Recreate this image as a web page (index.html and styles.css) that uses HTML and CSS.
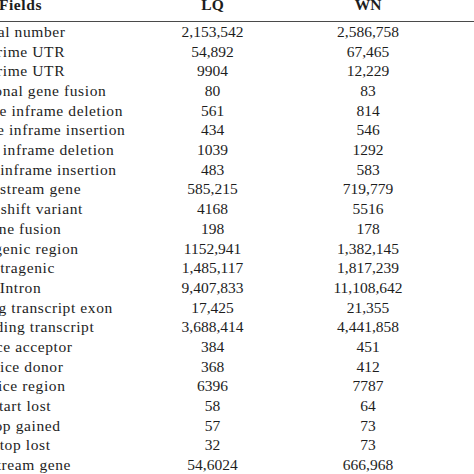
FILE: index.html
```html
<!DOCTYPE html>
<html lang="en">
<head>
<meta charset="utf-8">
<title>Variant annotation counts</title>
<link rel="stylesheet" href="styles.css">
</head>
<body>
<div class="frame">
  <table class="data">
    <colgroup>
      <col class="c-field">
      <col class="c-lq">
      <col class="c-wn">
      <col class="c-pad">
    </colgroup>
    <thead>
      <tr><th class="label">Fields</th><th>LQ</th><th>WN</th><th></th></tr>
    </thead>
    <tbody>
      <tr><td class="label">Total number</td><td>2,153,542</td><td>2,586,758</td><td></td></tr>
      <tr><td class="label">3 prime UTR</td><td>54,892</td><td>67,465</td><td></td></tr>
      <tr><td class="label">5 prime UTR</td><td>9904</td><td>12,229</td><td></td></tr>
      <tr><td class="label">Bidirectional gene fusion</td><td>80</td><td>83</td><td></td></tr>
      <tr><td class="label">Conservative inframe deletion</td><td>561</td><td>814</td><td></td></tr>
      <tr><td class="label">Conservative inframe insertion</td><td>434</td><td>546</td><td></td></tr>
      <tr><td class="label">Disruptive inframe deletion</td><td>1039</td><td>1292</td><td></td></tr>
      <tr><td class="label">Disruptive inframe insertion</td><td>483</td><td>583</td><td></td></tr>
      <tr><td class="label">Downstream gene</td><td>585,215</td><td>719,779</td><td></td></tr>
      <tr><td class="label">Frameshift variant</td><td>4168</td><td>5516</td><td></td></tr>
      <tr><td class="label">Gene fusion</td><td>198</td><td>178</td><td></td></tr>
      <tr><td class="label">Intergenic region</td><td>1152,941</td><td>1,382,145</td><td></td></tr>
      <tr><td class="label">Intragenic</td><td>1,485,117</td><td>1,817,239</td><td></td></tr>
      <tr><td class="label">Intron</td><td>9,407,833</td><td>11,108,642</td><td></td></tr>
      <tr><td class="label">Non coding transcript exon</td><td>17,425</td><td>21,355</td><td></td></tr>
      <tr><td class="label">Non coding transcript</td><td>3,688,414</td><td>4,441,858</td><td></td></tr>
      <tr><td class="label">Splice acceptor</td><td>384</td><td>451</td><td></td></tr>
      <tr><td class="label">Splice donor</td><td>368</td><td>412</td><td></td></tr>
      <tr><td class="label">Splice region</td><td>6396</td><td>7787</td><td></td></tr>
      <tr><td class="label">Start lost</td><td>58</td><td>64</td><td></td></tr>
      <tr><td class="label">Stop gained</td><td>57</td><td>73</td><td></td></tr>
      <tr><td class="label">Stop lost</td><td>32</td><td>73</td><td></td></tr>
      <tr><td class="label">Upstream gene</td><td>54,6024</td><td>666,968</td><td></td></tr>
    </tbody>
  </table>
</div>
</body>
</html>
```

FILE: styles.css
```css
html, body {
  margin: 0;
  padding: 0;
  background: #ffffff;
}

.frame {
  width: 474px;
  height: 474px;
  overflow: hidden;
  background: #ffffff;
}

.data {
  table-layout: fixed;
  width: 581px;
  margin: -5px 0 0 -94.5px;
  border-collapse: separate;
  border-spacing: 0;
  font-family: "Liberation Serif", "Times New Roman", serif;
  font-size: 15.5px;
  color: #1d1d1d;
}

.c-field { width: 230px; }
.c-lq { width: 154px; }
.c-wn { width: 157px; }
.c-pad { width: 40px; }

.data th,
.data td {
  padding: 0;
  line-height: 19.68px;
  text-align: center;
  white-space: nowrap;
  overflow: visible;
}

.data th {
  font-weight: bold;
  padding-bottom: 6.3px;
  border-bottom: 1px solid #4a4a4a;
}

.data .label {
  letter-spacing: 0.6px;
}
```
